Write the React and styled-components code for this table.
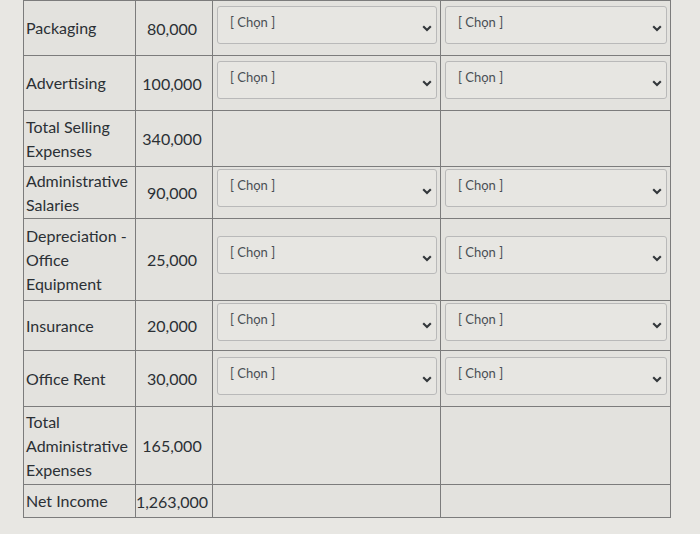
import React from 'react';
import styled, { createGlobalStyle } from 'styled-components';

const GlobalStyle = createGlobalStyle`
  html, body {
    margin: 0;
    padding: 0;
    background: #e8e7e3;
  }
  body {
    font-family: Lato, "Open Sans", sans-serif;
  }
`;

// top = distance from the row's top to the select box
const rows = [
  { label: ['Packaging'], amount: '80,000', height: 55, pick: true, top: 5 },
  { label: ['Advertising'], amount: '100,000', height: 55, pick: true, top: 5 },
  { label: ['Total Selling', 'Expenses'], amount: '340,000', height: 56 },
  { label: ['Administrative', 'Salaries'], amount: '90,000', height: 52, pick: true, top: 2 },
  { label: ['Depreciation -', 'Office', 'Equipment'], amount: '25,000', height: 82, pick: true, top: 17 },
  { label: ['Insurance'], amount: '20,000', height: 50, pick: true, top: 2 },
  { label: ['Office Rent'], amount: '30,000', height: 56, pick: true, top: 6 },
  { label: ['Total', 'Administrative', 'Expenses'], amount: '165,000', height: 78 },
  { label: ['Net Income'], amount: '1,263,000', height: 33 },
];

const Page = styled.div`
  padding-left: 23px;
  width: 700px;
  height: 534px;
  box-sizing: border-box;
  overflow: hidden;
`;

const Grid = styled.div`
  display: grid;
  grid-template-columns: 112px 77px 228px 230px;
  width: max-content;
  border-top: 1px solid #7c7c7c;
  border-left: 1px solid #7c7c7c;
  background: #e3e2de;
`;

const Cell = styled.div`
  height: ${(p) => p.$h}px;
  box-sizing: border-box;
  border-right: 1px solid #7c7c7c;
  border-bottom: 1px solid #7c7c7c;
  display: flex;
  align-items: center;
`;

const Label = styled(Cell)`
  padding-left: 2px;
  font-size: 16px;
  line-height: 24px;
  color: #2b3035;
  white-space: nowrap;
`;

const Amount = styled(Cell)`
  justify-content: center;
  padding-right: 4px;
  font-size: 16px;
  color: #2b3035;
`;

const PickCell = styled(Cell)`
  align-items: flex-start;
  padding: ${(p) => p.$top}px 3px 0 4px;
`;

const Select = styled.div`
  flex: 1;
  height: 38px;
  box-sizing: border-box;
  border: 1px solid #b9b9b9;
  border-radius: 3px;
  background: #e7e6e2;
  display: flex;
  justify-content: space-between;
  padding: 7px 4px 0 12px;
  font-size: 13px;
  color: #4a4f54;
`;

const Chevron = styled.svg`
  margin-top: 11px;
  width: 10px;
  height: 7px;
`;

const ChoiceBox = () => (
  <Select>
    <span>[ Chọn ]</span>
    <Chevron viewBox="0 0 10 7">
      <polyline points="1.2,1.2 5,5 8.8,1.2" fill="none" stroke="#33373b" strokeWidth="2.1" />
    </Chevron>
  </Select>
);

export default function App() {
  return (
    <Page>
      <GlobalStyle />
      <Grid>
        {rows.map((r) => (
          <React.Fragment key={r.label.join(' ')}>
            <Label $h={r.height}>
              <div>
                {r.label.map((l) => (
                  <div key={l}>{l}</div>
                ))}
              </div>
            </Label>
            <Amount $h={r.height}>{r.amount}</Amount>
            {r.pick ? (
              <>
                <PickCell $h={r.height} $top={r.top}>
                  <ChoiceBox />
                </PickCell>
                <PickCell $h={r.height} $top={r.top}>
                  <ChoiceBox />
                </PickCell>
              </>
            ) : (
              <>
                <Cell $h={r.height} />
                <Cell $h={r.height} />
              </>
            )}
          </React.Fragment>
        ))}
      </Grid>
    </Page>
  );
}
